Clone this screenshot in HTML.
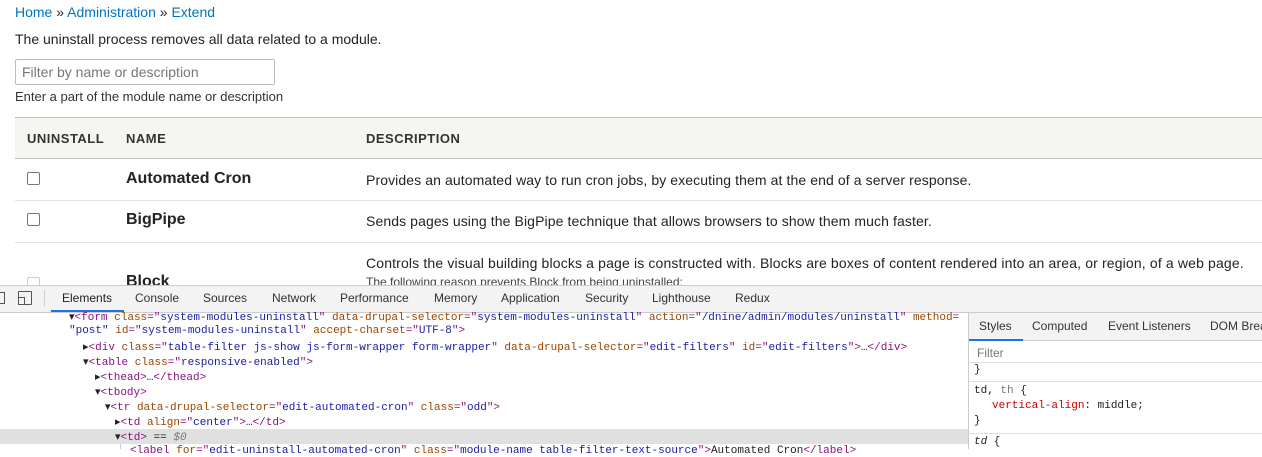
<!DOCTYPE html>
<html><head><meta charset="utf-8"><style>
*{margin:0;padding:0;box-sizing:border-box}
body{width:1262px;height:449px;overflow:hidden;background:#fff;font-family:"Liberation Sans",sans-serif;color:#232323;position:relative}
.a{position:absolute;white-space:nowrap}
a{color:#0074bd;text-decoration:none}
.cb{position:absolute;width:13px;height:13px;border:1px solid #777;border-radius:2px;background:#fff}
.code{font-family:"Liberation Mono",monospace;font-size:11px;color:#222}
.t{color:#881280}.n{color:#994500}.v{color:#1a1aa6}
.tab{position:absolute;top:291px;font-size:12px;color:#333;white-space:nowrap}
</style></head><body>
<div class="a" style="left:15px;top:4px;font-size:14px"><a>Home</a> » <a>Administration</a> » <a>Extend</a></div>
<div class="a" style="left:15px;top:31px;font-size:14px">The uninstall process removes all data related to a module.</div>
<div class="a" style="left:15px;top:59px;width:260px;height:26px;border:1px solid #bbb;border-radius:2px;font-size:14px;color:#777;padding:4px 6px">Filter by name or description</div>
<div class="a" style="left:15px;top:89px;font-size:13px;color:#333">Enter a part of the module name or description</div>
<div class="a" style="left:15px;top:117px;width:1247px;height:42px;background:#f5f5f2;border-top:1px solid #bfbfba;border-bottom:1px solid #bfbfba"></div>
<div class="a" style="left:27px;top:131px;font-size:13px;font-weight:bold;color:#333;letter-spacing:.5px">UNINSTALL</div>
<div class="a" style="left:126px;top:131px;font-size:13px;font-weight:bold;color:#333;letter-spacing:.5px">NAME</div>
<div class="a" style="left:366px;top:131px;font-size:13px;font-weight:bold;color:#333;letter-spacing:.5px">DESCRIPTION</div>
<div class="cb" style="left:27px;top:172px"></div>
<div class="a" style="left:126px;top:170px;font-size:16px;font-weight:bold">Automated Cron</div>
<div class="a" style="left:366px;top:172px;font-size:14px;letter-spacing:.1px">Provides an automated way to run cron jobs, by executing them at the end of a server response.</div>
<div class="a" style="left:15px;top:200px;width:1247px;border-top:1px solid #e6e4df"></div>
<div class="cb" style="left:27px;top:213px"></div>
<div class="a" style="left:126px;top:211px;font-size:16px;font-weight:bold">BigPipe</div>
<div class="a" style="left:366px;top:213px;font-size:14px;letter-spacing:.1px">Sends pages using the BigPipe technique that allows browsers to show them much faster.</div>
<div class="a" style="left:15px;top:242px;width:1247px;border-top:1px solid #e6e4df"></div>
<div class="a" style="left:366px;top:255px;font-size:14px;letter-spacing:.15px">Controls the visual building blocks a page is constructed with. Blocks are boxes of content rendered into an area, or region, of a web page.</div>
<div class="a" style="left:366px;top:275px;font-size:12px;color:#444">The following reason prevents Block from being uninstalled:</div>
<div class="a" style="left:126px;top:273px;font-size:16px;font-weight:bold">Block</div>
<div class="cb" style="left:27px;top:277px;border-color:#ccc"></div>
<!-- devtools -->
<div class="a" style="left:0;top:285px;width:1262px;height:164px;background:#fff"></div>
<div class="a" style="left:0;top:285px;width:1262px;height:28px;background:#f3f3f3;border-top:1px solid #ccc;border-bottom:1px solid #ccc"></div>
<div class="a" style="left:-4px;top:292px;width:9px;height:12px;border:1px solid #555"></div>
<div class="a" style="left:18px;top:291px;width:14px;height:14px;border:1px solid #555;border-radius:1px"></div>
<div class="a" style="left:18px;top:297px;width:7px;height:8px;border:1px solid #555;background:#f3f3f3"></div>
<div class="a" style="left:44px;top:290px;height:16px;border-left:1px solid #ccc"></div>
<div class="tab" style="left:62px;color:#222">Elements</div>
<div class="a" style="left:51px;top:310px;width:73px;height:2px;background:#1a73e8"></div>
<div class="tab" style="left:135px">Console</div><div class="tab" style="left:203px">Sources</div><div class="tab" style="left:272px">Network</div><div class="tab" style="left:340px">Performance</div><div class="tab" style="left:434px">Memory</div><div class="tab" style="left:501px">Application</div><div class="tab" style="left:585px">Security</div><div class="tab" style="left:652px">Lighthouse</div><div class="tab" style="left:735px">Redux</div>
<div class="a" style="left:0;top:429px;width:968px;height:15px;background:#e0e0e0"></div>
<div class="a" style="left:120px;top:444px;height:5px;border-left:1px solid #ccc"></div>
<div class="code">
<div class="a" style="left:69px;top:310px">▾<span class="t">&lt;form </span><span class="n">class</span><span class="t">="</span><span class="v">system-modules-uninstall</span><span class="t">" </span><span class="n">data-drupal-selector</span><span class="t">="</span><span class="v">system-modules-uninstall</span><span class="t">" </span><span class="n">action</span><span class="t">="</span><span class="v">/dnine/admin/modules/uninstall</span><span class="t">" </span><span class="n">method</span><span class="t">=</span></div>
<div class="a" style="left:69px;top:325px"><span class="v">"post"</span> <span class="n">id</span><span class="t">="</span><span class="v">system-modules-uninstall</span><span class="t">" </span><span class="n">accept-charset</span><span class="t">="</span><span class="v">UTF-8</span><span class="t">"&gt;</span></div>
<div class="a" style="left:83px;top:340px">▸<span class="t">&lt;div </span><span class="n">class</span><span class="t">="</span><span class="v">table-filter js-show js-form-wrapper form-wrapper</span><span class="t">" </span><span class="n">data-drupal-selector</span><span class="t">="</span><span class="v">edit-filters</span><span class="t">" </span><span class="n">id</span><span class="t">="</span><span class="v">edit-filters</span><span class="t">"&gt;</span>…<span class="t">&lt;/div&gt;</span></div>
<div class="a" style="left:83px;top:355px">▾<span class="t">&lt;table </span><span class="n">class</span><span class="t">="</span><span class="v">responsive-enabled</span><span class="t">"&gt;</span></div>
<div class="a" style="left:95px;top:370px">▸<span class="t">&lt;thead&gt;</span>…<span class="t">&lt;/thead&gt;</span></div>
<div class="a" style="left:95px;top:385px">▾<span class="t">&lt;tbody&gt;</span></div>
<div class="a" style="left:105px;top:400px">▾<span class="t">&lt;tr </span><span class="n">data-drupal-selector</span><span class="t">="</span><span class="v">edit-automated-cron</span><span class="t">" </span><span class="n">class</span><span class="t">="</span><span class="v">odd</span><span class="t">"&gt;</span></div>
<div class="a" style="left:115px;top:415px">▸<span class="t">&lt;td </span><span class="n">align</span><span class="t">="</span><span class="v">center</span><span class="t">"&gt;</span>…<span class="t">&lt;/td&gt;</span></div>
<div class="a" style="left:115px;top:430px">▾<span class="t">&lt;td&gt;</span> == <i style="color:#777">$0</i></div>
<div class="a" style="left:130px;top:445px"><span class="t">&lt;label </span><span class="n">for</span><span class="t">="</span><span class="v">edit-uninstall-automated-cron</span><span class="t">" </span><span class="n">class</span><span class="t">="</span><span class="v">module-name table-filter-text-source</span><span class="t">"&gt;</span>Automated Cron<span class="t">&lt;/label&gt;</span></div>
</div>
<div class="a" style="left:968px;top:313px;width:294px;height:136px;background:#fff;border-left:1px solid #ccc"></div>
<div class="a" style="left:969px;top:313px;width:293px;height:28px;background:#f3f3f3;border-bottom:1px solid #ccc;overflow:hidden"></div>
<div class="tab" style="left:979px;top:319px">Styles</div><div class="tab" style="left:1032px;top:319px">Computed</div><div class="tab" style="left:1108px;top:319px">Event Listeners</div><div class="tab" style="left:1210px;top:319px">DOM Breakpoints</div>
<div class="a" style="left:969px;top:339px;width:54px;height:2px;background:#1a73e8"></div>
<div class="a" style="left:977px;top:346px;font-size:12px;color:#777">Filter</div>
<div class="a" style="left:969px;top:362px;width:293px;border-top:1px solid #e0e0e0"></div>
<div class="code">
<div class="a" style="left:974px;top:364px">}</div>
<div class="a" style="left:969px;top:381px;width:293px;border-top:1px solid #ddd"></div>
<div class="a" style="left:974px;top:385px">td, <span style="color:#777">th</span> {</div>
<div class="a" style="left:992px;top:400px"><span style="color:#c80000">vertical-align</span>: middle;</div>
<div class="a" style="left:974px;top:415px">}</div>
<div class="a" style="left:969px;top:433px;width:293px;border-top:1px solid #ddd"></div>
<div class="a" style="left:974px;top:436px"><i>td</i> {</div>
</div>
</body></html>
